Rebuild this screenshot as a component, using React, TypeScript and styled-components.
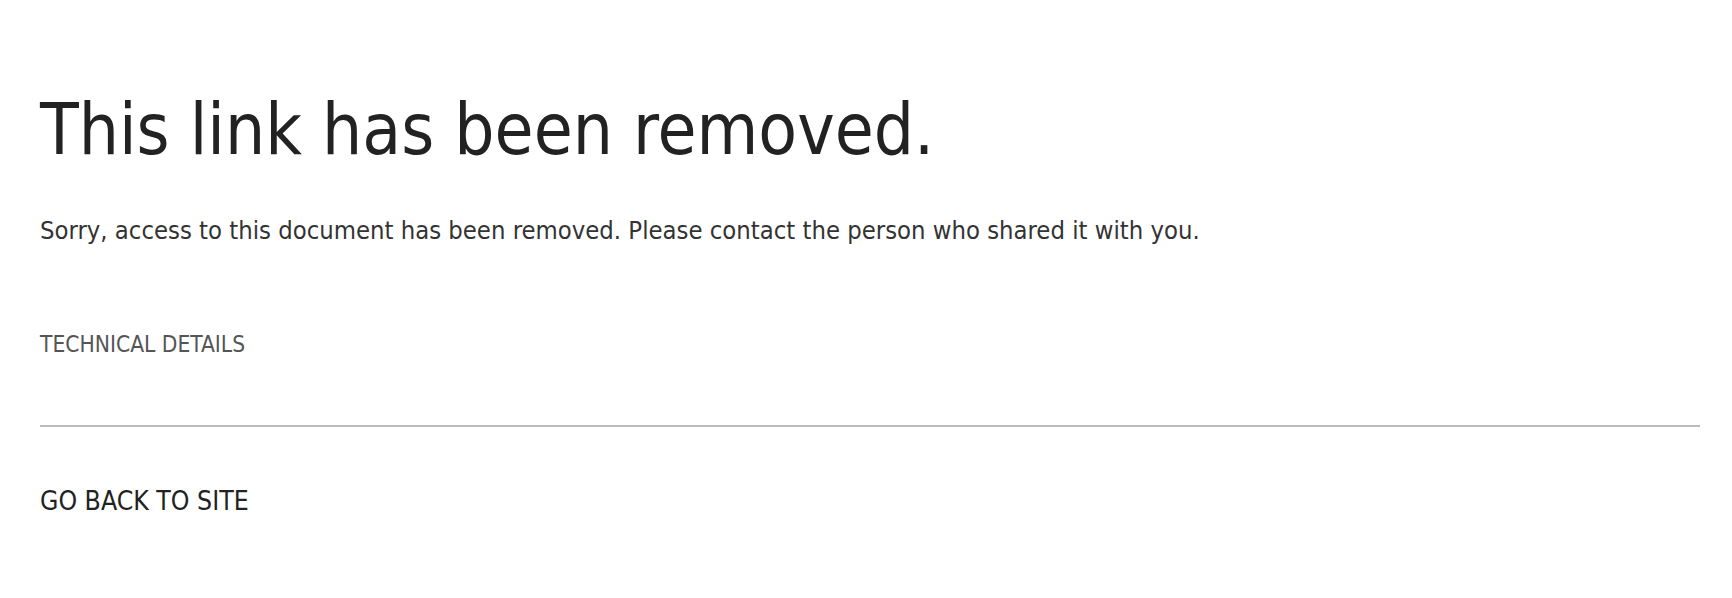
import React from "react";
import styled, { createGlobalStyle } from "styled-components";

const Global = createGlobalStyle`
  html, body { margin: 0; padding: 0; background: #fff; }
  body { font-family: "DejaVu Sans Condensed", "DejaVu Sans", sans-serif; }
`;

const Page = styled.main`
  display: flex;
  flex-direction: column;
  padding: 94px 32px 0 40px;
`;

const Title = styled.h1`
  margin: 0;
  font-size: 70.5px;
  line-height: 72px;
  font-weight: 400;
  color: #222;
`;

const Message = styled.p`
  margin: 51px 0 0;
  font-size: 25.4px;
  line-height: 26px;
  color: #333;
`;

const Details = styled.div`
  margin: 90px 0 0;
  font-size: 22.6px;
  line-height: 22px;
  color: #555;
`;

const Divider = styled.hr`
  margin: 70px 0 0;
  border: 0;
  height: 2px;
  background: #bbb;
`;

const BackLink = styled.a`
  margin-top: 61px;
  font-size: 26.4px;
  line-height: 26px;
  color: #222;
  text-decoration: none;
  align-self: flex-start;
`;

export default function App() {
  return (
    <>
      <Global />
      <Page>
        <Title>This link has been removed.</Title>
        <Message>
          Sorry, access to this document has been removed. Please contact the person who shared it with you.
        </Message>
        <Details>TECHNICAL DETAILS</Details>
        <Divider />
        <BackLink href="#">GO BACK TO SITE</BackLink>
      </Page>
    </>
  );
}
